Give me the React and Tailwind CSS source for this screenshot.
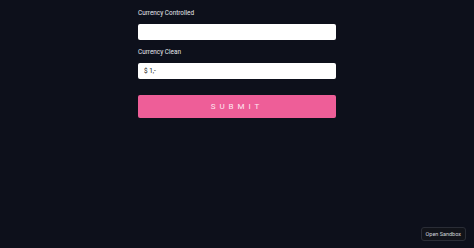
import React, { useState } from 'react';

export default function App() {
  const [controlled, setControlled] = useState('');
  const [clean, setClean] = useState('$ 1,-');

  return (
    <div
      className="relative min-h-[248px] w-full bg-[#0d101b] text-white"
      style={{ fontFamily: 'Roboto, "Liberation Sans", sans-serif' }}
    >
      <form
        className="mx-auto flex w-[198px] flex-col pt-[9px]"
        onSubmit={(e) => e.preventDefault()}
      >
        <label className="text-[6.4px] leading-[9px] text-[#e5e7eb]">Currency Controlled</label>
        <input
          value={controlled}
          onChange={(e) => setControlled(e.target.value)}
          className="mt-[6px] h-[16px] w-full rounded-[2px] bg-white px-[6px] text-[6.4px] text-[#111] outline-none"
        />
        <label className="mt-[8px] text-[6.4px] leading-[9px] text-[#e5e7eb]">Currency Clean</label>
        <input
          value={clean}
          onChange={(e) => setClean(e.target.value)}
          className="mt-[6px] h-[16px] w-full rounded-[2px] bg-white px-[6px] text-[6.4px] text-[#111] outline-none"
        />
        <button
          type="submit"
          className="mt-[16px] h-[23px] w-full rounded-[2px] bg-[#ee5e98] text-[8px] tracking-[0.5em] text-[#fde7f0]"
        >
          SUBMIT
        </button>
      </form>
      <button className="absolute bottom-[7px] right-[8px] rounded-[3px] border border-[#2a2d36] bg-[#111319] px-[4px] py-[2px] text-[5.5px] text-[#d1d5db]">
        Open Sandbox
      </button>
    </div>
  );
}
